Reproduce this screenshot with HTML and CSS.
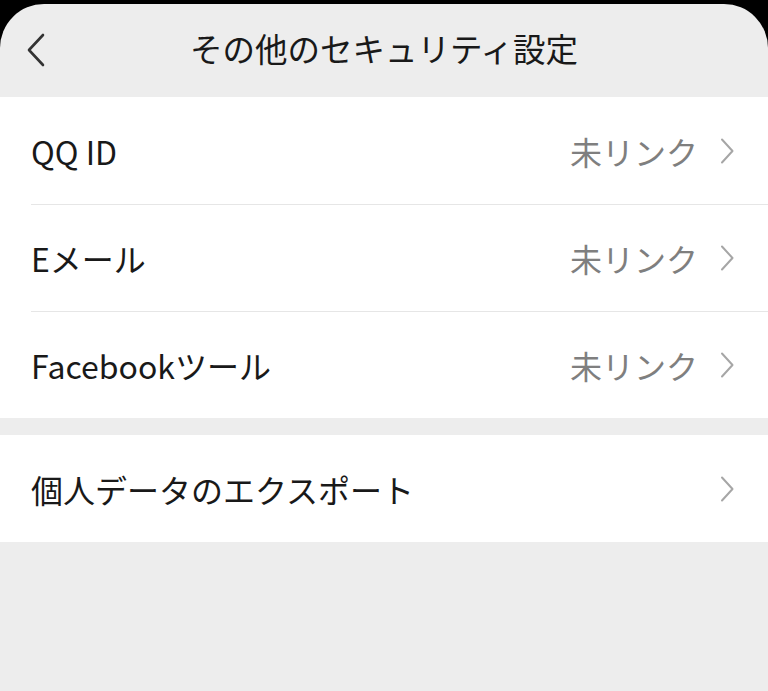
FILE: index.html
```html
<!DOCTYPE html>
<html lang="ja">
<head>
    <meta charset="UTF-8">
    <meta name="viewport" content="width=device-width, initial-scale=1.0">
    <title>その他のセキュリティ設定</title>
    <link rel="stylesheet" href="styles.css">
</head>
<body>
    <div class="screen">
        <header class="nav-bar">
            <span class="back">
                <svg width="22" height="34" viewBox="0 0 22 34"><path d="M17 2 L3 17 L17 32" fill="none" stroke="#333" stroke-width="2.6" stroke-linecap="round" stroke-linejoin="round"/></svg>
            </span>
            <h1>その他のセキュリティ設定</h1>
        </header>

        <section class="group">
            <div class="row">
                <span class="label">QQ ID</span>
                <span class="value">未リンク</span>
                <span class="arrow"><svg width="14" height="26" viewBox="0 0 14 26"><path d="M2 1.5 L12.5 13 L2 24.5" fill="none" stroke="#a6a6a6" stroke-width="2" stroke-linecap="round" stroke-linejoin="round"/></svg></span>
            </div>
            <div class="row">
                <span class="label">Eメール</span>
                <span class="value">未リンク</span>
                <span class="arrow"><svg width="14" height="26" viewBox="0 0 14 26"><path d="M2 1.5 L12.5 13 L2 24.5" fill="none" stroke="#a6a6a6" stroke-width="2" stroke-linecap="round" stroke-linejoin="round"/></svg></span>
            </div>
            <div class="row">
                <span class="label">Facebookツール</span>
                <span class="value">未リンク</span>
                <span class="arrow"><svg width="14" height="26" viewBox="0 0 14 26"><path d="M2 1.5 L12.5 13 L2 24.5" fill="none" stroke="#a6a6a6" stroke-width="2" stroke-linecap="round" stroke-linejoin="round"/></svg></span>
            </div>
        </section>

        <section class="group">
            <div class="row">
                <span class="label">個人データのエクスポート</span>
                <span class="arrow"><svg width="14" height="26" viewBox="0 0 14 26"><path d="M2 1.5 L12.5 13 L2 24.5" fill="none" stroke="#a6a6a6" stroke-width="2" stroke-linecap="round" stroke-linejoin="round"/></svg></span>
            </div>
        </section>
    </div>
</body>
</html>
```

FILE: styles.css
```css
html, body {
    margin: 0;
    padding: 0;
    height: 100%;
}
body {
    background-color: #000;
    font-family: "Noto Sans CJK JP", "Noto Sans", sans-serif;
    overflow: hidden;
}
.screen {
    margin-top: 4px;
    height: calc(100% - 4px);
    background-color: #ededed;
    border-radius: 44px 44px 0 0;
    overflow: hidden;
}
.nav-bar {
    height: 93px;
    display: flex;
    align-items: center;
    justify-content: center;
    position: relative;
}
.nav-bar h1 {
    margin: 0;
    font-size: 32.5px;
    font-weight: 400;
    color: #191919;
    margin-top: -6px;
}
.back {
    position: absolute;
    left: 26px;
    top: 29px;
    display: flex;
}
.group {
    background-color: #fff;
    margin-bottom: 17px;
}
.row {
    height: 107px;
    display: flex;
    align-items: center;
    padding: 0 34px 0 31px;
    position: relative;
}
.row + .row::before {
    content: "";
    position: absolute;
    top: 0;
    left: 31px;
    right: 0;
    border-top: 1px solid #e6e6e6;
}
.label {
    flex: 1;
    font-size: 32px;
    color: #191919;
}
.value {
    font-size: 32px;
    color: #7f7f7f;
    margin-right: 22px;
}
.arrow {
    display: flex;
}
```
